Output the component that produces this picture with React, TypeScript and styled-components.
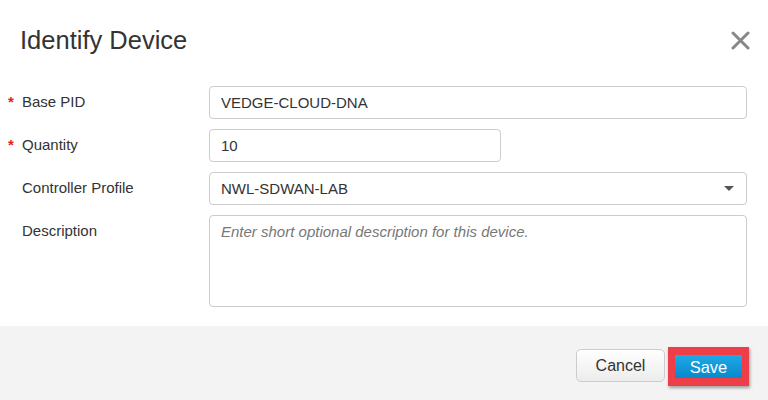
import styled, { createGlobalStyle } from "styled-components";

const GlobalStyle = createGlobalStyle`
  html, body {
    margin: 0;
    padding: 0;
    background: #ffffff;
  }
  body {
    font-family: "Liberation Sans", Arial, sans-serif;
    color: #333333;
  }
`;

const Dialog = styled.div`
  width: 768px;
  height: 400px;
  display: flex;
  flex-direction: column;
  background: #ffffff;
  overflow: hidden;
`;

const Header = styled.div`
  display: flex;
  align-items: center;
  justify-content: space-between;
  padding: 26px 18px 32px 20px;
`;

const Title = styled.h1`
  margin: 0;
  font-size: 25.5px;
  line-height: 28px;
  font-weight: normal;
  color: #333333;
`;

const CloseButton = styled.button`
  border: none;
  background: none;
  padding: 0;
  width: 19px;
  height: 19px;
  display: flex;
  cursor: pointer;
`;

const Form = styled.div`
  display: grid;
  grid-template-columns: 201px 1fr;
  row-gap: 10px;
  padding: 0 21px 19px 8px;
`;

const Label = styled.div`
  display: flex;
  align-items: flex-start;
  font-size: 15px;
  line-height: 17px;
  padding-top: 7px;
  color: #333333;
`;

const Required = styled.span<{ $show: boolean }>`
  width: 14px;
  flex-shrink: 0;
  color: #e0241b;
  font-weight: bold;
  font-size: 15px;
  visibility: ${(p) => (p.$show ? "visible" : "hidden")};
`;

const Field = styled.div<{ $width?: string }>`
  box-sizing: border-box;
  width: ${(p) => p.$width || "100%"};
  height: 33px;
  border: 1px solid #cccccc;
  border-radius: 4px;
  background: #ffffff;
  display: flex;
  align-items: center;
  justify-content: space-between;
  padding: 0 12px 0 11px;
  font-size: 15px;
  color: #333333;
`;

const TextArea = styled.div`
  box-sizing: border-box;
  width: 100%;
  height: 92px;
  border: 1px solid #cccccc;
  border-radius: 4px;
  padding: 7px 11px;
  font-size: 15px;
  line-height: 17px;
`;

const Placeholder = styled.span`
  font-style: italic;
  color: #777777;
`;

const Caret = styled.span`
  width: 0;
  height: 0;
  border-left: 5.5px solid transparent;
  border-right: 5.5px solid transparent;
  border-top: 5px solid #555555;
`;

const Footer = styled.div`
  flex: 1;
  background: #f3f3f3;
  display: flex;
  justify-content: flex-end;
  align-items: flex-start;
  gap: 3px;
  padding: 21px 19px 0 0;
`;

const CancelButton = styled.button`
  box-sizing: border-box;
  margin-top: 2px;
  width: 89px;
  height: 33px;
  border: 1px solid #cccccc;
  border-radius: 5px;
  background: linear-gradient(#ffffff, #ececec);
  font-family: "Liberation Sans", Arial, sans-serif;
  font-size: 16px;
  color: #333333;
`;

const SaveButton = styled.button`
  box-sizing: border-box;
  width: 81px;
  height: 39px;
  border: 7px solid #ee3e47;
  border-top-width: 8px;
  border-bottom-width: 8px;
  background: linear-gradient(#1ea9e8, #0689cc);
  box-shadow: 1px 2px 3px rgba(0, 0, 0, 0.35);
  font-family: "Liberation Sans", Arial, sans-serif;
  font-size: 16.5px;
  line-height: 20px;
  color: #ffffff;
  padding: 0;
`;

const CloseIcon = () => (
  <svg width="19" height="19" viewBox="0 0 19 19">
    <path
      d="M2 2 L17 17 M17 2 L2 17"
      stroke="#888888"
      strokeWidth="3"
      strokeLinecap="round"
      fill="none"
    />
  </svg>
);

const App = () => {
  return (
    <Dialog>
      <GlobalStyle />
      <Header>
        <Title>Identify Device</Title>
        <CloseButton aria-label="Close">
          <CloseIcon />
        </CloseButton>
      </Header>
      <Form>
        <Label>
          <Required $show>*</Required>Base PID
        </Label>
        <Field>VEDGE-CLOUD-DNA</Field>

        <Label>
          <Required $show>*</Required>Quantity
        </Label>
        <Field $width="292px">10</Field>

        <Label>
          <Required $show={false}>*</Required>Controller Profile
        </Label>
        <Field>
          NWL-SDWAN-LAB
          <Caret />
        </Field>

        <Label>
          <Required $show={false}>*</Required>Description
        </Label>
        <TextArea>
          <Placeholder>Enter short optional description for this device.</Placeholder>
        </TextArea>
      </Form>
      <Footer>
        <CancelButton>Cancel</CancelButton>
        <SaveButton>Save</SaveButton>
      </Footer>
    </Dialog>
  );
};

export default App;
